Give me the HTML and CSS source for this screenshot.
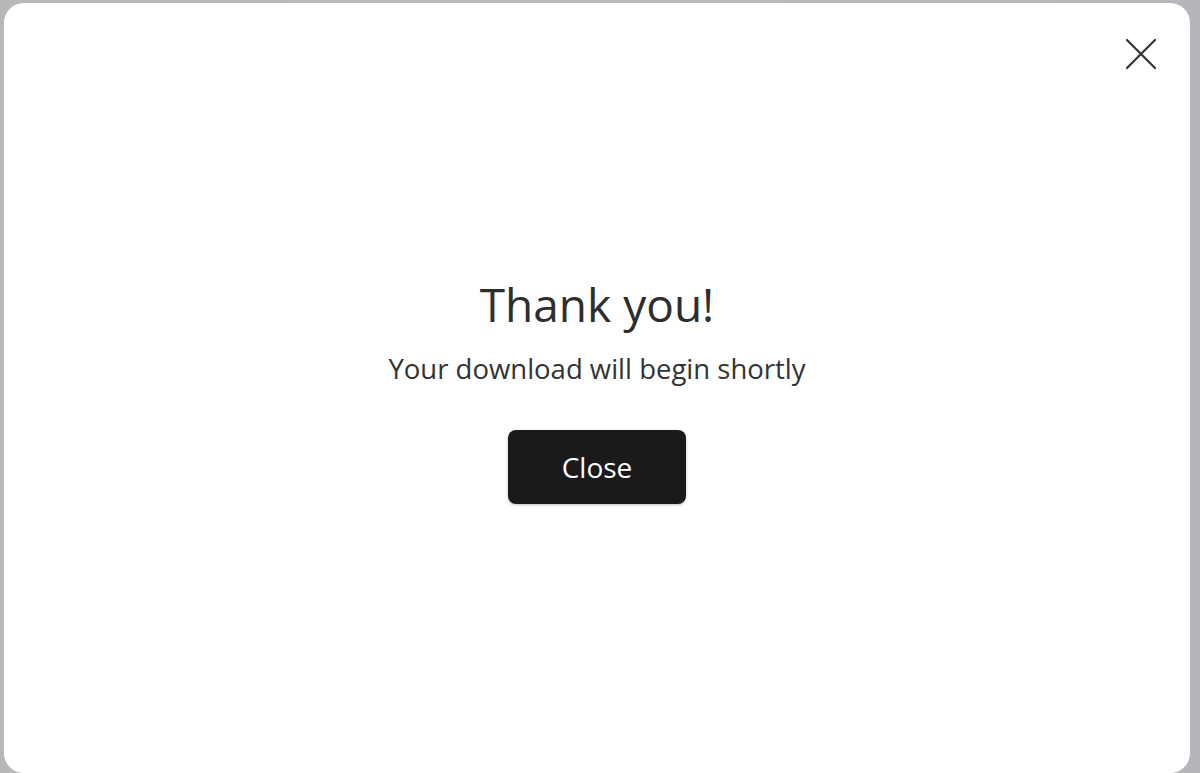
FILE: index.html
```html
<!DOCTYPE html>
<html lang="en">
<head>
<meta charset="utf-8">
<title>Thank you</title>
<link rel="stylesheet" href="styles.css">
</head>
<body>
<div class="backdrop">
  <div class="modal">
    <button class="close-x" aria-label="Close">
      <svg width="32" height="32" viewBox="0 0 32 32"><path d="M2 2 L30 30 M30 2 L2 30" stroke="#333" stroke-width="2.2" stroke-linecap="round" fill="none"/></svg>
    </button>
    <div class="content">
      <h1 class="title">Thank you!</h1>
      <p class="subtitle">Your download will begin shortly</p>
      <button class="btn">Close</button>
    </div>
  </div>
</div>
</body>
</html>
```

FILE: styles.css
```css
html, body {
  margin: 0;
  padding: 0;
  height: 100%;
}
body {
  background: #bababa;
  font-family: "Open Sans", "Noto Sans", sans-serif;
  overflow: hidden;
}
.backdrop {
  height: 773px;
  padding: 3px 10px 0 4px;
  box-sizing: border-box;
  background: linear-gradient(90deg, #b8b8b8 0%, #bbbbbb 50%, #b4b6ba 100%);
}
.modal {
  position: relative;
  height: 770px;
  background: #fff;
  border-radius: 20px;
  display: flex;
  align-items: center;
  justify-content: center;
}
.close-x {
  position: absolute;
  top: 35px;
  right: 33px;
  width: 32px;
  height: 32px;
  padding: 0;
  border: 0;
  background: transparent;
  display: flex;
}
.content {
  display: flex;
  flex-direction: column;
  align-items: center;
  margin-top: 2px;
}
.title {
  margin: 0;
  font-weight: 400;
  font-size: 46px;
  line-height: 60px;
  color: #2e2e2e;
}
.subtitle {
  margin: 15px 0 0;
  font-size: 27.5px;
  line-height: 40px;
  color: #333;
}
.btn {
  margin-top: 41px;
  width: 178px;
  height: 74px;
  border: 0;
  border-radius: 8px;
  background: #1a1a1a;
  color: #fff;
  font-family: inherit;
  font-size: 28px;
  box-shadow: 0 1px 3px rgba(0,0,0,0.25);
}
```
